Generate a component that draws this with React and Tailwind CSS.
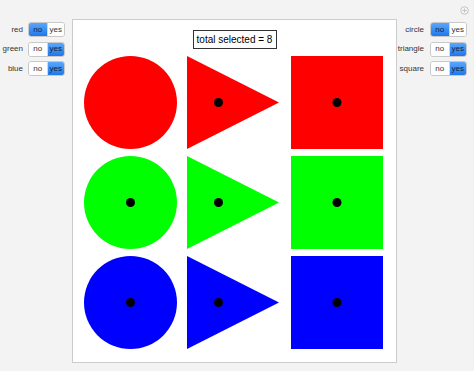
import React from "react";

const leftControls = [
  { label: "red", value: "no" },
  { label: "green", value: "yes" },
  { label: "blue", value: "yes" },
];

const rightControls = [
  { label: "circle", value: "no" },
  { label: "triangle", value: "yes" },
  { label: "square", value: "yes" },
];

const rows = [
  { color: "#ff0000", dots: [false, true, true] },
  { color: "#00ff00", dots: [true, true, true] },
  { color: "#0000ff", dots: [true, true, true] },
];

function Toggle({ value }) {
  const seg = (name) =>
    value === name
      ? "bg-gradient-to-b from-[#5aa6fa] to-[#1d78ea] text-[#0f2548]"
      : "bg-white text-[#333]";
  return (
    <div className="flex h-[15px] w-[37px] overflow-hidden rounded-[3px] border border-[#c9c9c9] text-[8px] leading-none">
      <div className={`flex w-1/2 items-center justify-center ${seg("no")}`}>no</div>
      <div className={`flex w-1/2 items-center justify-center border-l border-[#d6d6d6] ${seg("yes")}`}>yes</div>
    </div>
  );
}

function ControlRow({ label, value, gap }) {
  return (
    <div className={`flex items-center ${gap}`}>
      <span className="text-[8px] leading-none text-[#333]">{label}</span>
      <Toggle value={value} />
    </div>
  );
}

function Shape({ kind, color, dot }) {
  return (
    <svg width="93" height="93" viewBox="0 0 93 93">
      {kind === "circle" && <circle cx="46.5" cy="46.5" r="46.5" fill={color} />}
      {kind === "triangle" && <polygon points="0,0 0,93 92,46.5" fill={color} />}
      {kind === "square" && <rect x="0" y="0" width="92" height="93" fill={color} />}
      {dot && (
        <circle
          cx={kind === "circle" ? 46.5 : kind === "triangle" ? 31.5 : 46}
          cy="46.5"
          r="4.5"
          fill="#000"
        />
      )}
    </svg>
  );
}

export default function App() {
  return (
    <div
      className="flex h-[371px] w-[474px] bg-[#f3f3f3]"
      style={{ fontFamily: '"Liberation Sans", Arial, sans-serif' }}
    >
      {/* left setters */}
      <div className="flex w-[65px] flex-col items-end gap-[4.5px] pt-[22px]">
        {leftControls.map((c) => (
          <ControlRow key={c.label} label={c.label} value={c.value} gap="gap-[5px]" />
        ))}
      </div>

      {/* graphic panel */}
      <div className="ml-[7px] mt-[19px] flex h-[344px] w-[325px] flex-col items-center border border-[#cccccc] bg-white">
        <div className="mt-[10px] flex h-[19px] w-[84px] items-center justify-center border border-[#333] text-[10px] leading-none text-black">
          total selected = 8
        </div>
        <div className="mt-[7px] flex w-full flex-col gap-[7px] pl-[11px]">
          {rows.map((r, i) => (
            <div key={i} className="flex">
              <Shape kind="circle" color={r.color} dot={r.dots[0]} />
              <div className="ml-[10px]">
                <Shape kind="triangle" color={r.color} dot={r.dots[1]} />
              </div>
              <div className="ml-[11px]">
                <Shape kind="square" color={r.color} dot={r.dots[2]} />
              </div>
            </div>
          ))}
        </div>
      </div>

      {/* right setters */}
      <div className="flex flex-1 flex-col items-end pr-[7px]">
        <div className="mr-[-2px] mt-[6px] h-[9px]">
          <svg width="9" height="9" viewBox="0 0 9 9">
            <circle cx="4.5" cy="4.5" r="3.8" fill="none" stroke="#c4c4c4" strokeWidth="1" />
            <path d="M4.5 2.5v4M2.5 4.5h4" stroke="#c4c4c4" strokeWidth="1" />
          </svg>
        </div>
        <div className="mt-[7px] flex flex-col items-end gap-[4.5px]">
          {rightControls.map((c) => (
            <ControlRow key={c.label} label={c.label} value={c.value} gap="gap-[6px]" />
          ))}
        </div>
      </div>
    </div>
  );
}
